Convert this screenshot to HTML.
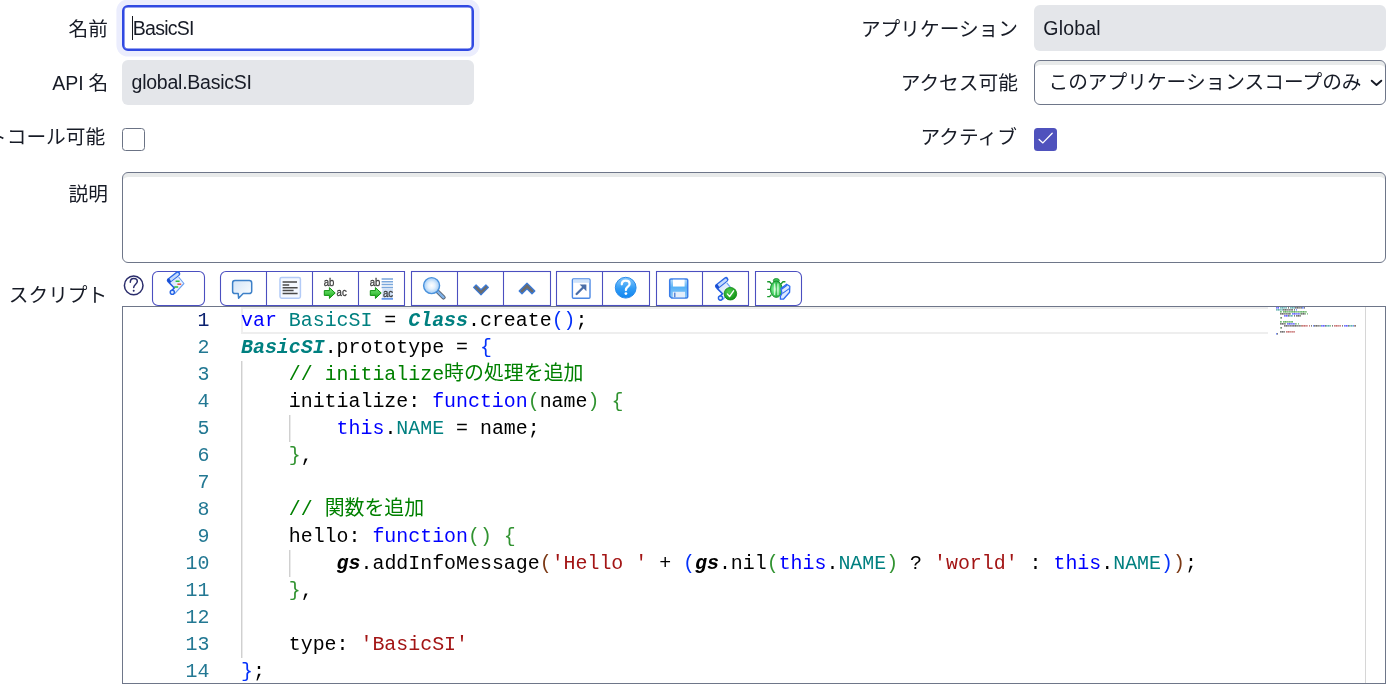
<!DOCTYPE html>
<html lang="ja">
<head>
<meta charset="utf-8">
<title>Script Include - BasicSI</title>
<style>
html,body{margin:0;padding:0;background:#fff;}
body{will-change:transform;width:1389px;height:689px;position:relative;overflow:hidden;font-family:"Liberation Sans",sans-serif;color:#171b26;}
.abs,.ht,.lat,.inp,.ro,.cb,.cbc,.ta,.sel,.caret{position:absolute;}
.ht{color:#171b26;white-space:nowrap;line-height:1.15;font-family:"Liberation Sans","Noto Sans CJK JP",sans-serif;}
.lat{font-size:19.5px;line-height:22px;white-space:nowrap;color:#171b26;}
.inp{box-sizing:border-box;background:#fff;border-radius:6px;}
.inp.focus{border:2px solid #3049e2;box-shadow:0 0 0 5.6px #ebedfd,inset 0 0 0 0.55px #3049e2;}
.caret{width:1px;background:#14161c;}
.ro{background:#e4e6ea;border-radius:6px;}
.cb{box-sizing:border-box;width:23px;height:23px;border:1px solid #6b7385;border-radius:3.5px;background:#fff;}
.cbc{width:23px;height:23px;border-radius:3.5px;background:#4f52bd;}
.cbc svg{display:block;}
.ta,.sel{box-sizing:border-box;border:1px solid #6e7689;border-radius:6px;background:#fff;box-shadow:inset 0 4.5px 0 -0.5px #e8eaea;}
#editor{position:absolute;box-sizing:content-box;border:1px solid #6e7689;overflow:hidden;background:#fff;font-family:"Liberation Mono",monospace;font-size:19.91px;line-height:27px;color:#000;}
#editor>*{position:absolute;}
.curline{box-sizing:border-box;border:2px solid #eeeeee;}
.guide{width:1px;background:#d0d0d0;box-shadow:1px 0 0 rgba(208,208,208,.45);}
.ovr{width:1px;background:#d6d6d6;}
.mmbg{background:#fff;}
#minimap path{stroke-width:1.4;fill:none;stroke-dasharray:0.8 0.45 0.6 0.25 1 0.4 0.7 0.3;}
.lnum{left:0;width:86.5px;height:27px;text-align:right;color:#237893;}
.lnum.act{color:#0b216f;}
.cl{left:118px;height:27px;white-space:pre;}
.bi{font-weight:bold;font-style:italic;}
.cj{display:inline-block;color:#008000;overflow:visible;height:27px;vertical-align:top;letter-spacing:0;font-family:"Liberation Mono","Noto Sans CJK JP",monospace;}
</style>
</head>
<body>
<span class="ht" style="left:68.5px;top:18.3px;font-size:19.7px;">名前</span>
<div class="inp focus" style="left:122px;top:4.7px;width:352px;height:46.3px"></div>
<div class="caret" style="left:132px;top:16px;height:24px"></div>
<span class="lat" id="t_name" style="left:132.8px;top:16.8px;letter-spacing:-0.75px">BasicSI</span>
<span class="lat" id="t_api" style="left:52.3px;top:72.4px;letter-spacing:0px">API</span>
<span class="ht" style="left:88.4px;top:72.1px;font-size:19.7px;">名</span>
<div class="ro" style="left:122px;top:60px;width:352px;height:44.7px"></div>
<span class="lat" id="t_apiv" style="left:131.6px;top:71.3px;letter-spacing:-0.25px">global.BasicSI</span>
<span class="ht" style="left:-110.6px;top:126.2px;font-size:19.7px;">クライアントコール可能</span>
<div class="cb" style="left:122px;top:128px"></div>
<span class="ht" style="left:68.5px;top:183.1px;font-size:19.7px;">説明</span>
<div class="ta" style="left:122px;top:172px;width:1264px;height:90.5px"></div>
<span class="ht" style="left:860.9px;top:18.2px;font-size:19.7px;">アプリケーション</span>
<div class="ro" style="left:1034px;top:5px;width:352px;height:46px"></div>
<span class="lat" id="t_glob" style="left:1043.3px;top:17.3px;letter-spacing:0.2px">Global</span>
<span class="ht" style="left:900.7px;top:72.2px;font-size:19.7px;">アクセス可能</span>
<div class="sel" style="left:1034px;top:60px;width:352px;height:45px"></div>
<span class="ht" style="left:1048.5px;top:70.9px;font-size:19.7px;">このアプリケーションスコープのみ</span>
<svg class="abs" style="left:1368px;top:76px" width="18" height="14" viewBox="0 0 18 14"><path d="M3.7 4.7 L8.5 9 L13.3 4.7" fill="none" stroke="#171b26" stroke-width="1.9" stroke-linecap="round" stroke-linejoin="round"/></svg>
<span class="ht" style="left:920.6px;top:126.2px;font-size:19.7px;">アクティブ</span>
<div class="cbc" style="left:1034px;top:128px"><svg width="23" height="23" viewBox="0 0 23 23"><path d="M5.1 11.4 L8.9 14.9 L18.2 5.3" fill="none" stroke="#fff" stroke-width="1.3" stroke-linecap="round" stroke-linejoin="round"/></svg></div>
<span class="ht" style="left:8.8px;top:284.1px;font-size:19.7px;">スクリプト</span>
<svg class="abs" id="toolbar" style="left:118px;top:264px" width="700" height="46" viewBox="118 264 700 46"><defs><linearGradient id="gsheet" x1="0" y1="0" x2="1" y2="1"><stop offset="0" stop-color="#cfe0fb"/><stop offset="1" stop-color="#ffffff"/></linearGradient><linearGradient id="gbub" x1="0" y1="0" x2="1" y2="1"><stop offset="0" stop-color="#d3e4f7"/><stop offset="1" stop-color="#ffffff"/></linearGradient><radialGradient id="gmag" cx="0.5" cy="0.5" r="0.5"><stop offset="0" stop-color="#ffffff"/><stop offset="0.45" stop-color="#e4f1fd"/><stop offset="1" stop-color="#9fcbf7"/></radialGradient><linearGradient id="ghelp" x1="0" y1="0" x2="0" y2="1"><stop offset="0" stop-color="#86c8fb"/><stop offset="0.55" stop-color="#2f9bf5"/><stop offset="1" stop-color="#0f86f0"/></linearGradient><linearGradient id="gsave" x1="0" y1="0" x2="0" y2="1"><stop offset="0" stop-color="#bfe0fb"/><stop offset="0.45" stop-color="#57b2f6"/><stop offset="1" stop-color="#8fcaf8"/></linearGradient><radialGradient id="gbug" cx="0.45" cy="0.5" r="0.62"><stop offset="0" stop-color="#e2fbe2"/><stop offset="0.45" stop-color="#5fe07a"/><stop offset="1" stop-color="#119a2c"/></radialGradient><radialGradient id="gchk" cx="0.4" cy="0.35" r="0.7"><stop offset="0" stop-color="#4fcf4f"/><stop offset="1" stop-color="#0e8f12"/></radialGradient><linearGradient id="garr" x1="0" y1="0" x2="0" y2="1"><stop offset="0" stop-color="#7ff07f"/><stop offset="1" stop-color="#15a315"/></linearGradient></defs><circle cx="133.7" cy="285.4" r="9.3" fill="none" stroke="#2a2c6b" stroke-width="1.5"/><path d="M130.3 282.3 C130.3 279.6 132 278.6 133.8 278.6 C135.8 278.6 137.3 279.8 137.3 281.6 C137.3 284.2 133.7 284.4 133.7 287.6" fill="none" stroke="#2a2c6b" stroke-width="1.5" stroke-linecap="round"/><circle cx="133.7" cy="290.7" r="1" fill="#2a2c6b"/><rect x="152.5" y="271.5" width="52" height="34.0" rx="5.5" fill="none" stroke="#4b4fc0" stroke-width="1.1"/><path d="M404.5 271.5 H226.0 A5.5 5.5 0 0 0 220.5 277.0 V300.0 A5.5 5.5 0 0 0 226.0 305.5 H404.5 Z" fill="none" stroke="#4b4fc0" stroke-width="1.1"/><path d="M266.5 271.5 V305.5 M312.5 271.5 V305.5 M358.5 271.5 V305.5" fill="none" stroke="#4b4fc0" stroke-width="1.1"/><rect x="411.5" y="271.5" width="139" height="34.0" fill="none" stroke="#4b4fc0" stroke-width="1.1"/><path d="M457.5 271.5 V305.5 M503.5 271.5 V305.5" fill="none" stroke="#4b4fc0" stroke-width="1.1"/><rect x="556.5" y="271.5" width="93" height="34.0" fill="none" stroke="#4b4fc0" stroke-width="1.1"/><path d="M602.5 271.5 V305.5" fill="none" stroke="#4b4fc0" stroke-width="1.1"/><rect x="656.5" y="271.5" width="92" height="34.0" fill="none" stroke="#4b4fc0" stroke-width="1.1"/><path d="M702.5 271.5 V305.5" fill="none" stroke="#4b4fc0" stroke-width="1.1"/><path d="M755.5 271.5 H796.0 A5.5 5.5 0 0 1 801.5 277.0 V300.0 A5.5 5.5 0 0 1 796.0 305.5 H755.5 Z" fill="none" stroke="#4b4fc0" stroke-width="1.1"/><g transform="translate(0.00 0.00)"><path d="M170 283 L177.4 276.4 L183.9 283.6 L174.4 293.9 L171 291 L174.6 287.6 Z" fill="url(#gsheet)"/><path d="M178.6 277 L183.9 283.5 L174.5 293.9" fill="none" stroke="#6da2f4" stroke-width="1.15" stroke-linejoin="round"/><path d="M168.7 282.3 L174.3 288 L171.2 291" fill="none" stroke="#2059e0" stroke-width="1.6" stroke-linejoin="round"/><path d="M169.3 280.4 L177.8 273.7" stroke="#2a66e6" stroke-width="5" stroke-linecap="round" fill="none"/><path d="M170.6 279.6 L177.5 274.2" stroke="#c6dbfb" stroke-width="2.7" stroke-linecap="round" fill="none"/><ellipse cx="169" cy="280.7" rx="1.5" ry="2.4" transform="rotate(-38 169 280.7)" fill="#1a4fd4"/><circle cx="172.3" cy="292.3" r="2.1" fill="#dfeafd" stroke="#2563e4" stroke-width="1.4"/><path d="M175.6 281.3 H179.6 M174.2 287 H178.2" stroke="#2fbf3a" stroke-width="1.5"/><path d="M177.4 284.2 H181.2" stroke="#e8503a" stroke-width="1.5"/></g><path d="M235 280.5 H249.3 A2.4 2.4 0 0 1 251.7 282.9 V291.2 A2.4 2.4 0 0 1 249.3 293.6 H243.2 L238.6 298.3 L238.2 293.6 H235 A2.4 2.4 0 0 1 232.6 291.2 V282.9 A2.4 2.4 0 0 1 235 280.5 Z" fill="url(#gbub)" stroke="#3d80c8" stroke-width="1.5" stroke-linejoin="round"/><rect x="280" y="277.6" width="20.4" height="20.6" rx="1.6" fill="#f4f8ff" stroke="#b3cbf7" stroke-width="1.5"/><path d="M282.6 282 H297 M282.6 284.9 H289.2 M282.6 287.7 H297.6 M282.6 290.6 H293.6 M282.6 293.5 H297.6" stroke="#4a4a4a" stroke-width="1.5"/><g transform="translate(0 0)"><text x="0" y="0" transform="translate(323.7 285.7) scale(0.76 0.94)" font-family="Liberation Sans, sans-serif" font-size="12.6" fill="#3c3c3c" stroke="#3c3c3c" stroke-width="0.35">ab</text><text x="0" y="0" transform="translate(336.6 295.9) scale(0.76 0.94)" font-family="Liberation Sans, sans-serif" font-size="12.6" fill="#3c3c3c" stroke="#3c3c3c" stroke-width="0.35">ac</text><path d="M324.3 290.6 H329.4 V287.6 L335.2 293 L329.4 298.4 V295.4 H324.3 Z" fill="url(#garr)" stroke="#109310" stroke-width="1" stroke-linejoin="round"/></g><g transform="translate(46 0)"><path d="M335.6 279 H347 M335.6 281.8 H347 M335.6 284.6 H347 M335.6 287.4 H347" stroke="#7aa7dc" stroke-width="1.5"/><rect x="336.3" y="288.4" width="10.7" height="9.4" fill="#cfe0f5"/><path d="M335.6 298.9 H347" stroke="#3f7fe8" stroke-width="1.4"/><text x="0" y="0" transform="translate(323.7 285.7) scale(0.76 0.94)" font-family="Liberation Sans, sans-serif" font-size="12.6" fill="#3c3c3c" stroke="#3c3c3c" stroke-width="0.35">ab</text><text x="0" y="0" transform="translate(337.0 296.9) scale(0.76 0.94)" font-family="Liberation Sans, sans-serif" font-size="12.6" fill="#3c3c3c" stroke="#3c3c3c" stroke-width="0.35">ac</text><path d="M324.3 290.6 H329.4 V287.6 L335.2 293 L329.4 298.4 V295.4 H324.3 Z" fill="url(#garr)" stroke="#109310" stroke-width="1" stroke-linejoin="round"/></g><path d="M437.8 291.8 L443.6 297.4" stroke="#5b6470" stroke-width="4.2" stroke-linecap="round"/><path d="M438.2 292.2 L443.5 297.3" stroke="#7fb2ea" stroke-width="2.4" stroke-linecap="round"/><circle cx="431.6" cy="285.6" r="8" fill="url(#gmag)" stroke="#4a92dc" stroke-width="1.4"/><path d="M473.6 287.4 L476.1 284.9 L481 289.7 L485.9 284.9 L488.4 287.4 L481 294.8 Z" fill="#6b6b6b" stroke="#3a7ad8" stroke-width="1.2" stroke-linejoin="round"/><path d="M519.2 291 L527 283.1 L534.8 291 L532 293.8 L527 288.9 L522 293.8 Z" fill="#6b6b6b" stroke="#3a7ad8" stroke-width="1.3" stroke-linejoin="round"/><rect x="572.4" y="278.9" width="17.6" height="19.3" rx="1" fill="#ffffff" stroke="#4a88e4" stroke-width="1.4"/><rect x="573.1" y="279.6" width="16.2" height="3.2" fill="#cfe3fb"/><path d="M576.6 294 L584.6 286" stroke="#4a6ea8" stroke-width="2.3" stroke-linecap="round"/><path d="M579.6 284.4 H586.4 V291.2 Z" fill="#4a6ea8"/><circle cx="625.7" cy="287.7" r="10.4" fill="url(#ghelp)" stroke="#2b8ceb" stroke-width="1"/><path d="M621.8 284.3 C621.8 281.6 623.6 280.6 625.7 280.6 C628 280.6 629.6 281.9 629.6 283.9 C629.6 286.7 625.9 286.8 625.9 290" fill="none" stroke="#fff" stroke-width="2.3" stroke-linecap="round"/><circle cx="625.9" cy="293.6" r="1.4" fill="#fff"/><path d="M671 278.9 H686.4 A1.3 1.3 0 0 1 687.7 280.2 V296.7 A1.3 1.3 0 0 1 686.4 298 H671.6 L669.7 296.1 V280.2 A1.3 1.3 0 0 1 671 278.9 Z" fill="url(#gsave)" stroke="#3a7de8" stroke-width="1.5" stroke-linejoin="round"/><rect x="673" y="279.7" width="11.6" height="6.8" fill="#ffffff"/><rect x="672.8" y="291.8" width="12.2" height="5.6" fill="#e3eefb"/><rect x="674.2" y="292.6" width="1.2" height="4.6" fill="#3a6fd0"/><g transform="translate(548.20 5.80)"><path d="M170 283 L177.4 276.4 L183.9 283.6 L174.4 293.9 L171 291 L174.6 287.6 Z" fill="url(#gsheet)"/><path d="M178.6 277 L183.9 283.5 L174.5 293.9" fill="none" stroke="#6da2f4" stroke-width="1.15" stroke-linejoin="round"/><path d="M168.7 282.3 L174.3 288 L171.2 291" fill="none" stroke="#2059e0" stroke-width="1.6" stroke-linejoin="round"/><path d="M169.3 280.4 L177.8 273.7" stroke="#2a66e6" stroke-width="5" stroke-linecap="round" fill="none"/><path d="M170.6 279.6 L177.5 274.2" stroke="#c6dbfb" stroke-width="2.7" stroke-linecap="round" fill="none"/><ellipse cx="169" cy="280.7" rx="1.5" ry="2.4" transform="rotate(-38 169 280.7)" fill="#1a4fd4"/><circle cx="172.3" cy="292.3" r="2.1" fill="#dfeafd" stroke="#2563e4" stroke-width="1.4"/></g><circle cx="730.4" cy="293.7" r="6.3" fill="url(#gchk)" stroke="#0d8a10" stroke-width="0.8"/><path d="M727.3 293.9 L729.6 296.5 L733.6 290.8" fill="none" stroke="#fff" stroke-width="1.35" stroke-linecap="round" stroke-linejoin="round"/><path d="M767.2 281.8 H769.6 L771.6 284 M785.4 281.8 H783 L781 284 M767.2 289.4 H770.4 M767.2 296.6 H769.6 L771.4 294.6" fill="none" stroke="#1a9a2e" stroke-width="1.4"/><ellipse cx="776.3" cy="280.6" rx="3" ry="2.1" fill="#3cc257" stroke="#148a28" stroke-width="0.8"/><ellipse cx="776.3" cy="289.2" rx="5.9" ry="8.2" fill="url(#gbug)" stroke="#148a28" stroke-width="0.9"/><path d="M774.6 283.5 V295 M778 283.5 V295" stroke="#e8fbe8" stroke-width="1.1" stroke-opacity="0.8"/><path d="M776.3 282.5 V296.8" stroke="#1fa83a" stroke-width="0.8"/><path d="M781 288.6 L786.6 284.2 L789.8 286.2 L789.6 292.2 L783.6 299 L780.4 299.2 L780.4 296.2 L782 293.4 Z" fill="#dbe8fd" stroke="#2b6af0" stroke-width="1.3" stroke-linejoin="round"/><path d="M781.6 289.2 L787 285.2 M782.6 293.4 L789.2 288.6" stroke="#2b6af0" stroke-width="1.1" fill="none"/></svg>
<div id="editor" style="left:122px;top:306px;width:1262px;height:376px"><div class="curline" style="left:118px;top:0;width:1125px;height:27px"></div><div class="mmbg" style="left:1145px;top:0;width:97px;height:376px"></div><div class="guide" style="left:118px;top:54px;height:297px"></div><div class="guide" style="left:166px;top:108px;height:27px"></div><div class="guide" style="left:166px;top:243px;height:27px"></div><div class="ovr" style="left:1242.0px;top:0;height:376px"></div><div class="lnum act" style="top:0px">1</div><div class="cl" style="top:0px"><span style="color:#0000ff">var</span> <span style="color:#008080">BasicSI</span> = <span class="bi" style="color:#008080">Class</span>.create<span style="color:#0431fa">()</span>;</div><div class="lnum" style="top:27px">2</div><div class="cl" style="top:27px"><span class="bi" style="color:#008080">BasicSI</span>.prototype = <span style="color:#0431fa">{</span></div><div class="lnum" style="top:54px">3</div><div class="cl" style="top:54px">    <span style="color:#008000">// initialize</span><span class="cj" style="width:139.3px">時の処理を追加</span></div><div class="cl" style="top:54px"></div><div class="lnum" style="top:81px">4</div><div class="cl" style="top:81px">    initialize: <span style="color:#0000ff">function</span><span style="color:#319331">(</span>name<span style="color:#319331">)</span> <span style="color:#319331">{</span></div><div class="lnum" style="top:108px">5</div><div class="cl" style="top:108px">        <span style="color:#0000ff">this</span>.<span style="color:#008080">NAME</span> = name;</div><div class="lnum" style="top:135px">6</div><div class="cl" style="top:135px">    <span style="color:#319331">}</span>,</div><div class="lnum" style="top:162px">7</div><div class="lnum" style="top:189px">8</div><div class="cl" style="top:189px">    <span style="color:#008000">// </span><span class="cj" style="width:99.5px">関数を追加</span></div><div class="cl" style="top:189px"></div><div class="lnum" style="top:216px">9</div><div class="cl" style="top:216px">    hello: <span style="color:#0000ff">function</span><span style="color:#319331">()</span> <span style="color:#319331">{</span></div><div class="lnum" style="top:243px">10</div><div class="cl" style="top:243px">        <span class="bi" style="color:#000000">gs</span>.addInfoMessage<span style="color:#7b3814">(</span><span style="color:#a31515">'Hello '</span> + <span style="color:#0431fa">(</span><span class="bi" style="color:#000000">gs</span>.nil<span style="color:#319331">(</span><span style="color:#0000ff">this</span>.<span style="color:#008080">NAME</span><span style="color:#319331">)</span> ? <span style="color:#a31515">'world'</span> : <span style="color:#0000ff">this</span>.<span style="color:#008080">NAME</span><span style="color:#0431fa">)</span><span style="color:#7b3814">)</span>;</div><div class="lnum" style="top:270px">11</div><div class="cl" style="top:270px">    <span style="color:#319331">}</span>,</div><div class="lnum" style="top:297px">12</div><div class="lnum" style="top:324px">13</div><div class="cl" style="top:324px">    type: <span style="color:#a31515">'BasicSI'</span></div><div class="lnum" style="top:351px">14</div><div class="cl" style="top:351px"><span style="color:#0431fa">}</span>;</div><svg class="abs" id="minimap" style="left:1153px;top:0" width="92" height="60" viewBox="0 0 92 60"><path d="M0 0.9H3" stroke="#0000ff" stroke-opacity="0.9"/><path d="M4 0.9H11" stroke="#008080" stroke-opacity="0.9"/><path d="M12 0.9H13" stroke="#000000" stroke-opacity="0.85"/><path d="M14 0.9H19" stroke="#008080" stroke-opacity="0.9"/><path d="M19 0.9H26" stroke="#000000" stroke-opacity="0.85"/><path d="M26 0.9H28" stroke="#0431fa" stroke-opacity="0.9"/><path d="M28 0.9H29" stroke="#000000" stroke-opacity="0.85"/><path d="M0 2.9H7" stroke="#008080" stroke-opacity="0.9"/><path d="M7 2.9H17" stroke="#000000" stroke-opacity="0.85"/><path d="M18 2.9H19" stroke="#000000" stroke-opacity="0.85"/><path d="M20 2.9H21" stroke="#0431fa" stroke-opacity="0.9"/><path d="M4 4.9H6" stroke="#008000" stroke-opacity="0.9"/><path d="M7 4.9H31" stroke="#008000" stroke-opacity="0.9"/><path d="M4 6.9H15" stroke="#000000" stroke-opacity="0.85"/><path d="M16 6.9H24" stroke="#0000ff" stroke-opacity="0.9"/><path d="M24 6.9H25" stroke="#319331" stroke-opacity="0.9"/><path d="M25 6.9H29" stroke="#000000" stroke-opacity="0.85"/><path d="M29 6.9H30" stroke="#319331" stroke-opacity="0.9"/><path d="M31 6.9H32" stroke="#319331" stroke-opacity="0.9"/><path d="M8 8.9H12" stroke="#0000ff" stroke-opacity="0.9"/><path d="M12 8.9H13" stroke="#000000" stroke-opacity="0.85"/><path d="M13 8.9H17" stroke="#008080" stroke-opacity="0.9"/><path d="M18 8.9H19" stroke="#000000" stroke-opacity="0.85"/><path d="M20 8.9H25" stroke="#000000" stroke-opacity="0.85"/><path d="M4 10.9H5" stroke="#319331" stroke-opacity="0.9"/><path d="M5 10.9H6" stroke="#000000" stroke-opacity="0.85"/><path d="M4 14.9H6" stroke="#008000" stroke-opacity="0.9"/><path d="M7 14.9H17" stroke="#008000" stroke-opacity="0.9"/><path d="M4 16.9H10" stroke="#000000" stroke-opacity="0.85"/><path d="M11 16.9H19" stroke="#0000ff" stroke-opacity="0.9"/><path d="M19 16.9H21" stroke="#319331" stroke-opacity="0.9"/><path d="M22 16.9H23" stroke="#319331" stroke-opacity="0.9"/><path d="M8 18.9H25" stroke="#000000" stroke-opacity="0.85"/><path d="M25 18.9H26" stroke="#7b3814" stroke-opacity="0.9"/><path d="M26 18.9H32" stroke="#a31515" stroke-opacity="0.9"/><path d="M33 18.9H34" stroke="#a31515" stroke-opacity="0.9"/><path d="M35 18.9H36" stroke="#000000" stroke-opacity="0.85"/><path d="M37 18.9H38" stroke="#0431fa" stroke-opacity="0.9"/><path d="M38 18.9H44" stroke="#000000" stroke-opacity="0.85"/><path d="M44 18.9H45" stroke="#319331" stroke-opacity="0.9"/><path d="M45 18.9H49" stroke="#0000ff" stroke-opacity="0.9"/><path d="M49 18.9H50" stroke="#000000" stroke-opacity="0.85"/><path d="M50 18.9H54" stroke="#008080" stroke-opacity="0.9"/><path d="M54 18.9H55" stroke="#319331" stroke-opacity="0.9"/><path d="M56 18.9H57" stroke="#000000" stroke-opacity="0.85"/><path d="M58 18.9H65" stroke="#a31515" stroke-opacity="0.9"/><path d="M66 18.9H67" stroke="#000000" stroke-opacity="0.85"/><path d="M68 18.9H72" stroke="#0000ff" stroke-opacity="0.9"/><path d="M72 18.9H73" stroke="#000000" stroke-opacity="0.85"/><path d="M73 18.9H77" stroke="#008080" stroke-opacity="0.9"/><path d="M77 18.9H78" stroke="#0431fa" stroke-opacity="0.9"/><path d="M78 18.9H79" stroke="#7b3814" stroke-opacity="0.9"/><path d="M79 18.9H80" stroke="#000000" stroke-opacity="0.85"/><path d="M4 20.9H5" stroke="#319331" stroke-opacity="0.9"/><path d="M5 20.9H6" stroke="#000000" stroke-opacity="0.85"/><path d="M4 24.9H9" stroke="#000000" stroke-opacity="0.85"/><path d="M10 24.9H19" stroke="#a31515" stroke-opacity="0.9"/><path d="M0 26.9H1" stroke="#0431fa" stroke-opacity="0.9"/><path d="M1 26.9H2" stroke="#000000" stroke-opacity="0.85"/></svg></div>
</body>
</html>
